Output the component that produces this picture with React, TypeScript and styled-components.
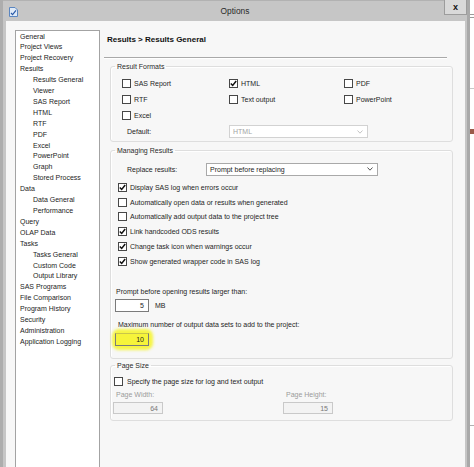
import React from 'react';
import styled, { createGlobalStyle } from 'styled-components';

const GlobalStyle = createGlobalStyle`
  html, body {
    margin: 0;
    padding: 0;
  }
  body {
    width: 474px;
    height: 467px;
    overflow: hidden;
    background: #fff;
    font-family: "Liberation Sans", Arial, sans-serif;
    font-size: 7px;
    color: #1e1e1e;
  }
`;

const Screen = styled.div`
  display: flex;
  width: 474px;
  height: 467px;
`;

const Window = styled.div`
  box-sizing: border-box;
  width: 470px;
  height: 100%;
  display: flex;
  flex-direction: column;
  background: #c6c6c6;
  border-left: 3px solid #adadad;
  border-right: 3px solid #a9a9a9;
`;

const TitleBar = styled.div`
  height: 21px;
  flex: none;
  display: grid;
  grid-template-columns: 1fr auto 1fr;
  align-items: start;
  border-top: 1px solid #b2b2b2;
  box-sizing: border-box;
`;

const AppIcon = styled.svg`
  margin: 6px 0 0 6px;
  display: block;
`;

const Title = styled.div`
  font-size: 8.4px;
  line-height: 20px;
  color: #2a2a2a;
`;

const CloseButton = styled.div`
  justify-self: end;
  box-sizing: border-box;
  width: 23px;
  height: 15px;
  margin-top: -1px;
  display: flex;
  align-items: center;
  justify-content: center;
  background: #d9d9d9;
  border: 1px solid #9c9c9c;
  border-top: none;
  font-size: 9px;
  font-weight: bold;
  color: #111;
`;

const Body = styled.div`
  flex: 1;
  min-height: 0;
  display: flex;
  margin: 0 2px 0 3px;
  background: #f7f7f7;
  overflow: hidden;
`;

const NavTree = styled.div`
  box-sizing: border-box;
  width: 85px;
  flex: none;
  margin: 9px 0 0 9px;
  padding: 0.5px 0 0 4px;
  background: #fff;
  border: 1px solid #a3a3a3;
  border-bottom: none;
`;

const NavItem = styled.div<{ $indent?: boolean }>`
  line-height: 10.9px;
  white-space: nowrap;
  padding-left: ${p => (p.$indent ? '13px' : '0')};
  color: #1c1c1c;
`;

const Panel = styled.div`
  flex: 1;
  min-width: 0;
  display: flex;
  flex-direction: column;
  padding: 14px 12px 0 4px;
`;

const Heading = styled.div`
  margin-left: 3px;
  font-size: 8px;
  font-weight: bold;
  line-height: 10px;
  color: #111;
`;

const Rule = styled.div`
  margin: 12px 6px 0 0;
  border-top: 1px solid #a9a9a9;
  border-bottom: 1px solid #ffffff;
`;

const Group = styled.fieldset<{ $top?: number }>`
  margin: ${p => p.$top ?? 3}px 0 0 6px;
  padding: 0;
  min-width: 0;
  border: 1px solid #dedede;
  border-radius: 3px;
  box-shadow: inset 1px 1px 0 #fff;
`;

const Legend = styled.legend`
  margin-left: 4px;
  padding: 0 2px;
  font-size: 7px;
  line-height: 9px;
  color: #2a2a2a;
`;

const FormatGrid = styled.div`
  display: grid;
  grid-template-columns: 107px 115px 1fr;
  grid-auto-rows: 16px;
  padding: 4.5px 0 1.5px 11px;
`;

const CheckItem = styled.label<{ $gap?: number }>`
  display: flex;
  align-items: center;
  gap: ${p => p.$gap ?? 3}px;
  white-space: nowrap;
`;

const Box = styled.span`
  box-sizing: border-box;
  width: 9px;
  height: 9px;
  flex: none;
  display: flex;
  align-items: center;
  justify-content: center;
  background: #fff;
  border: 1px solid #474747;
`;

const DefaultLabel = styled.div`
  align-self: center;
  padding-left: 5px;
`;

const Combo = styled.div<{ $width: number; $disabled?: boolean }>`
  box-sizing: border-box;
  width: ${p => p.$width}px;
  height: 13px;
  display: flex;
  align-items: center;
  justify-content: space-between;
  padding: 0 4px 0 3px;
  background: #fff;
  border: 1px solid ${p => (p.$disabled ? '#d2d2d2' : '#a9a9a9')};
  color: ${p => (p.$disabled ? '#a4a4a4' : '#1e1e1e')};
  align-self: center;
  grid-column: ${p => (p.$disabled ? '2 / 4' : 'auto')};
`;

const ManageBody = styled.div`
  display: flex;
  flex-direction: column;
  padding: 0 0 12px 5px;
`;

const ReplaceRow = styled.div`
  margin-top: 7px;
  height: 14px;
  display: flex;
  align-items: center;
`;

const ReplaceLabel = styled.div`
  width: 79px;
  margin-left: 11px;
`;

const CheckList = styled.div`
  margin-top: 4px;
  padding-left: 2px;
  display: flex;
  flex-direction: column;
`;

const CheckRow = styled.div`
  height: 14.8px;
  display: flex;
  align-items: center;
`;

const Caption = styled.div<{ $top: number; $indent?: number }>`
  margin-top: ${p => p.$top}px;
  padding-left: ${p => p.$indent ?? 0}px;
  line-height: 9px;
  white-space: nowrap;
`;

const InputRow = styled.div`
  margin-top: 3.5px;
  display: flex;
  align-items: center;
  gap: 6px;
`;

const NumberBox = styled.div<{ $width: number; $disabled?: boolean; $clear?: boolean }>`
  box-sizing: border-box;
  width: ${p => p.$width}px;
  height: ${p => (p.$disabled ? 12 : 13)}px;
  margin-left: -1px;
  padding-right: 4px;
  display: flex;
  align-items: center;
  justify-content: flex-end;
  background: ${p => (p.$clear ? 'transparent' : p.$disabled ? '#f3f3f3' : '#fff')};
  border: 1px solid ${p => (p.$disabled ? '#c9c9c9' : '#7b7b7b')};
  border-top-color: ${p => (p.$clear ? '#c9c64a' : p.$disabled ? '#c9c9c9' : '#7b7b7b')};
  color: ${p => (p.$disabled ? '#777' : '#1e1e1e')};
`;

const Highlight = styled.div`
  margin-top: 4px;
  align-self: flex-start;
  display: flex;
  background: #f6f43a;
  box-shadow: 0 0 3px 4px rgba(246, 244, 58, 0.95);
  border-radius: 3px;
`;

const PageBody = styled.div`
  padding: 4.5px 0 6px 3px;
`;

const PageCheck = styled.div`
  height: 14px;
  display: flex;
  align-items: center;
`;

const DimRow = styled.div`
  margin-top: 3px;
  display: grid;
  grid-template-columns: 170px 1fr;
`;

const DimField = styled.div`
  display: flex;
  flex-direction: column;
  align-items: flex-start;
`;

const DimLabel = styled.div`
  padding-left: 2px;
  line-height: 8px;
  margin-bottom: 3px;
  color: #9b9b9b;
`;

const Outside = styled.div`
  flex: 1;
  display: flex;
  flex-direction: column;
  background: #fff;
`;

const Mark = styled.div<{ $top: number; $color: string; $h?: number }>`
  margin-top: ${p => p.$top}px;
  height: ${p => p.$h ?? 1}px;
  background: ${p => p.$color};
`;

const Tick = () => (
  <svg width="7" height="7" viewBox="0 0 7 7">
    <polyline points="0.8,3.4 2.7,5.4 6.2,1" fill="none" stroke="#111" strokeWidth="1.5" />
  </svg>
);

const Check = ({ on }: { on?: boolean }) => <Box>{on && <Tick />}</Box>;

const Chevron = ({ color }: { color: string }) => (
  <svg width="6" height="4" viewBox="0 0 6 4">
    <polyline points="0.5,0.5 3,3.2 5.5,0.5" fill="none" stroke={color} strokeWidth="1" />
  </svg>
);

const navItems: [string, boolean][] = [
  ['General', false],
  ['Project Views', false],
  ['Project Recovery', false],
  ['Results', false],
  ['Results General', true],
  ['Viewer', true],
  ['SAS Report', true],
  ['HTML', true],
  ['RTF', true],
  ['PDF', true],
  ['Excel', true],
  ['PowerPoint', true],
  ['Graph', true],
  ['Stored Process', true],
  ['Data', false],
  ['Data General', true],
  ['Performance', true],
  ['Query', false],
  ['OLAP Data', false],
  ['Tasks', false],
  ['Tasks General', true],
  ['Custom Code', true],
  ['Output Library', true],
  ['SAS Programs', false],
  ['File Comparison', false],
  ['Program History', false],
  ['Security', false],
  ['Administration', false],
  ['Application Logging', false],
];

const formats: [string, boolean][] = [
  ['SAS Report', false],
  ['HTML', true],
  ['PDF', false],
  ['RTF', false],
  ['Text output', false],
  ['PowerPoint', false],
  ['Excel', false],
];

const managing: [string, boolean][] = [
  ['Display SAS log when errors occur', true],
  ['Automatically open data or results when generated', false],
  ['Automatically add output data to the project tree', false],
  ['Link handcoded ODS results', true],
  ['Change task icon when warnings occur', true],
  ['Show generated wrapper code in SAS log', true],
];

export default function App() {
  return (
    <>
      <GlobalStyle />
      <Screen>
        <Window>
          <TitleBar>
            <AppIcon width="9" height="10" viewBox="0 0 9 10">
              <path d="M0.5 0.5 H6 L8.5 3 V9.5 H0.5 Z" fill="#dfeaf7" stroke="#5b86c0" />
              <path d="M2 6 L3.6 7.6 L7 3.4" fill="none" stroke="#2a5aa8" strokeWidth="1.2" />
            </AppIcon>
            <Title>Options</Title>
            <CloseButton>x</CloseButton>
          </TitleBar>
          <Body>
            <NavTree>
              {navItems.map(([label, indent]) => (
                <NavItem key={label} $indent={indent}>
                  {label}
                </NavItem>
              ))}
            </NavTree>
            <Panel>
              <Heading>Results &gt; Results General</Heading>
              <Rule />

              <Group>
                <Legend>Result Formats</Legend>
                <FormatGrid>
                  {formats.map(([label, on]) => (
                    <CheckItem key={label}>
                      <Check on={on} />
                      {label}
                    </CheckItem>
                  ))}
                  <span />
                  <span />
                  <DefaultLabel>Default:</DefaultLabel>
                  <Combo $width={139} $disabled>
                    HTML
                    <Chevron color="#c4c4c4" />
                  </Combo>
                </FormatGrid>
              </Group>

              <Group $top={4}>
                <Legend>Managing Results</Legend>
                <ManageBody>
                  <ReplaceRow>
                    <ReplaceLabel>Replace results:</ReplaceLabel>
                    <Combo $width={172}>
                      Prompt before replacing
                      <Chevron color="#555" />
                    </Combo>
                  </ReplaceRow>
                  <CheckList>
                    {managing.map(([label, on]) => (
                      <CheckRow key={label}>
                        <CheckItem>
                          <Check on={on} />
                          {label}
                        </CheckItem>
                      </CheckRow>
                    ))}
                  </CheckList>
                  <Caption $top={18}>Prompt before opening results larger than:</Caption>
                  <InputRow>
                    <NumberBox $width={34}>5</NumberBox>
                    MB
                  </InputRow>
                  <Caption $top={7.5} $indent={2}>
                    Maximum number of output data sets to add to the project:
                  </Caption>
                  <Highlight>
                    <NumberBox $width={34} $clear>
                      10
                    </NumberBox>
                  </Highlight>
                </ManageBody>
              </Group>

              <Group $top={2}>
                <Legend>Page Size</Legend>
                <PageBody>
                  <PageCheck>
                    <CheckItem $gap={4}>
                      <Check />
                      Specify the page size for log and text output
                    </CheckItem>
                  </PageCheck>
                  <DimRow>
                    <DimField>
                      <DimLabel>Page Width:</DimLabel>
                      <NumberBox $width={50} $disabled>
                        64
                      </NumberBox>
                    </DimField>
                    <DimField>
                      <DimLabel>Page Height:</DimLabel>
                      <NumberBox $width={50} $disabled>
                        15
                      </NumberBox>
                    </DimField>
                  </DimRow>
                </PageBody>
              </Group>
            </Panel>
          </Body>
        </Window>
        <Outside>
          <Mark $top={14} $color="#9a9a9a" />
          <Mark $top={2} $color="#9a9a9a" />
          <Mark $top={70} $color="#c8c8c8" />
          <Mark $top={40} $color="#9b5a4a" $h={5} />
          <Mark $top={291} $color="#b0b0b0" />
        </Outside>
      </Screen>
    </>
  );
}
